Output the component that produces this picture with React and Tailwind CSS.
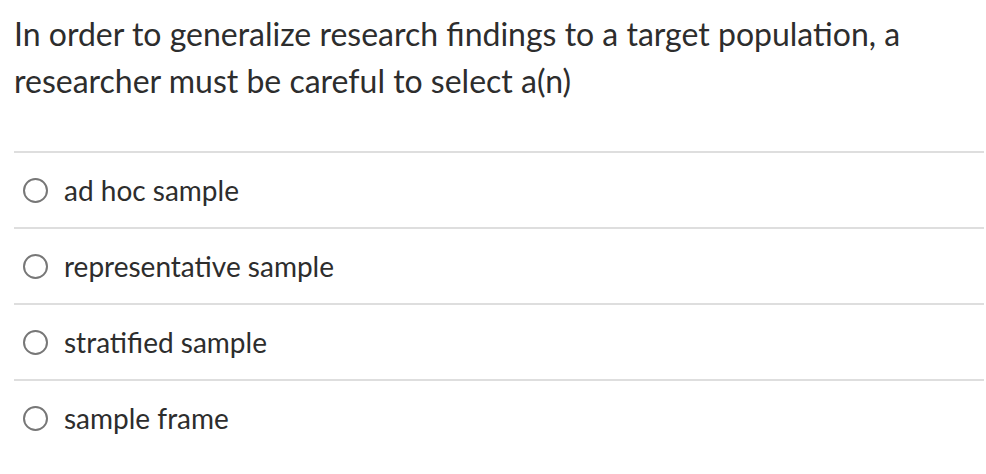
import React from 'react';

const answers = ['ad hoc sample', 'representative sample', 'stratified sample', 'sample frame'];

export default function App() {
  return (
    <div className="w-[986px] h-[474px] bg-white overflow-hidden text-[#2d2d2d]" style={{ fontFamily: 'Lato, "Noto Sans", sans-serif' }}>
      <div className="pl-[14px] pr-[2px] pt-[10px]">
        <p className="text-[32px] leading-[47px] pr-[60px]">
          In order to generalize research findings to a target population, a researcher must be careful to select a(n)
        </p>
        <div className="mt-[47px]">
          {answers.map((a) => (
            <label key={a} className="flex items-center h-[76px] border-t-2 border-[#dedede]">
              <span className="ml-[9px] w-[25px] h-[25px] rounded-full border-2 border-[#777] shrink-0" />
              <span className="ml-[16px] text-[28px] leading-none">{a}</span>
            </label>
          ))}
        </div>
      </div>
    </div>
  );
}
